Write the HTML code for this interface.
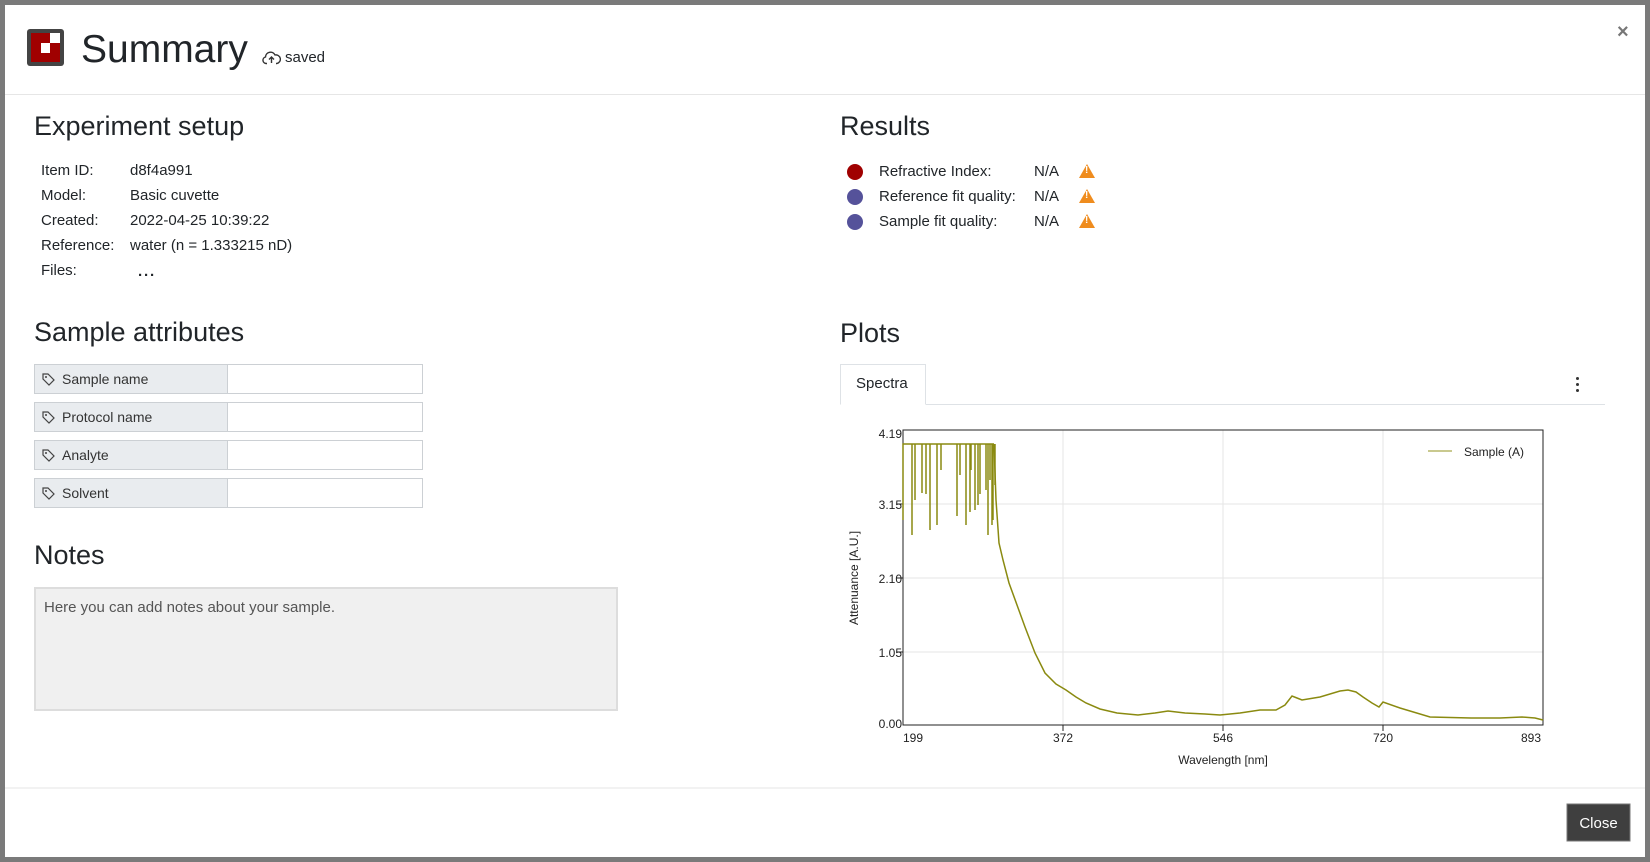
<!DOCTYPE html>
<html><head><meta charset="utf-8"><style>
*{box-sizing:border-box;margin:0;padding:0}
body{width:1650px;height:862px;background:#7a7a7a;font-family:"Liberation Sans",sans-serif;color:#212529;position:relative;overflow:hidden}
.modal{position:absolute;left:5px;top:5px;width:1640px;height:852px;background:#fff}
.abs{position:absolute}
h2{position:absolute;font-weight:400;font-size:27px;line-height:32px;white-space:nowrap}
.row{position:absolute;font-size:15px;white-space:nowrap}
.inp{position:absolute;left:29px;width:389px;height:30px;border:1px solid #ccd0d4;background:#fff}
.inp .lab{position:absolute;left:0;top:0;width:193px;height:28px;background:#e9ecef;border-right:1px solid #ccd0d4;font-size:14px;line-height:28px;padding-left:27px;color:#333}
.inp svg{position:absolute;left:7px;top:8px;z-index:2}
.dot{position:absolute;width:16px;height:16px;border-radius:50%}
.warn{position:absolute;width:0;height:0;border-left:8px solid transparent;border-right:8px solid transparent;border-bottom:14px solid #ef8c1e}
.warn::after{content:"!";position:absolute;left:-2px;top:1px;color:#fff;font-size:10px;font-weight:bold}
.t{font-size:12px;fill:#222}
</style></head><body>
<div class="modal">
 <div class="abs" style="left:22px;top:24px;width:37px;height:37px;background:#444;border-radius:3px"></div>
 <div class="abs" style="left:26px;top:28px;width:29px;height:29px;background:#a00000"></div>
 <div class="abs" style="left:45px;top:28px;width:10px;height:10px;background:#fff"></div>
 <div class="abs" style="left:36px;top:38px;width:9px;height:10px;background:#fff"></div>
 <div class="abs" style="left:76px;top:22px;font-size:39px;line-height:46px">Summary</div>
 <svg class="abs" style="left:257px;top:45px" width="19" height="15" viewBox="0 0 19 15"><path d="M5 13.5H4a3.3 3.3 0 0 1-.5-6.5A5 5 0 0 1 13 5a3.5 3.5 0 0 1 2 8.5h-1" fill="none" stroke="#333" stroke-width="1.4"/><path d="M9.5 13V7M7 9.5l2.5-2.5 2.5 2.5" fill="none" stroke="#333" stroke-width="1.4"/></svg>
 <div class="abs" style="left:280px;top:44px;font-size:15px">saved</div>
 <div class="abs" style="left:1612px;top:16px;font-size:20px;font-weight:bold;color:#777">×</div>
 <div class="abs" style="left:0;top:89px;width:1640px;height:1px;background:#e6e6e6"></div>

 <h2 style="left:29px;top:105px">Experiment setup</h2>
 <div class="row" style="left:36px;top:157px">Item ID:</div><div class="row" style="left:125px;top:157px">d8f4a991</div>
 <div class="row" style="left:36px;top:182px">Model:</div><div class="row" style="left:125px;top:182px">Basic cuvette</div>
 <div class="row" style="left:36px;top:207px">Created:</div><div class="row" style="left:125px;top:207px">2022-04-25 10:39:22</div>
 <div class="row" style="left:36px;top:232px">Reference:</div><div class="row" style="left:125px;top:232px">water (n = 1.333215 nD)</div>
 <div class="row" style="left:36px;top:257px">Files:</div><div class="row" style="left:133px;top:262px;font-weight:bold;letter-spacing:1px">···</div>

 <h2 style="left:29px;top:311px">Sample attributes</h2>
 <div class="inp" style="top:359px"><svg width="13" height="13" viewBox="0 0 13 13"><path d="M1 1h5l6 6-5 5-6-6z" fill="none" stroke="#444" stroke-width="1.2"/><circle cx="4" cy="4" r="1" fill="#444"/></svg><div class="lab">Sample name</div></div>
 <div class="inp" style="top:397px"><svg width="13" height="13" viewBox="0 0 13 13"><path d="M1 1h5l6 6-5 5-6-6z" fill="none" stroke="#444" stroke-width="1.2"/><circle cx="4" cy="4" r="1" fill="#444"/></svg><div class="lab">Protocol name</div></div>
 <div class="inp" style="top:435px"><svg width="13" height="13" viewBox="0 0 13 13"><path d="M1 1h5l6 6-5 5-6-6z" fill="none" stroke="#444" stroke-width="1.2"/><circle cx="4" cy="4" r="1" fill="#444"/></svg><div class="lab">Analyte</div></div>
 <div class="inp" style="top:473px"><svg width="13" height="13" viewBox="0 0 13 13"><path d="M1 1h5l6 6-5 5-6-6z" fill="none" stroke="#444" stroke-width="1.2"/><circle cx="4" cy="4" r="1" fill="#444"/></svg><div class="lab">Solvent</div></div>

 <h2 style="left:29px;top:534px">Notes</h2>
 <div class="abs" style="left:29px;top:582px;width:584px;height:124px;background:#f0f0f0;border:2px solid #ddd;font-size:15px;color:#555;padding:10px 8px">Here you can add notes about your sample.</div>

 <h2 style="left:835px;top:105px">Results</h2>
 <div class="dot" style="left:842px;top:159px;background:#a00000"></div>
 <div class="dot" style="left:842px;top:184px;background:#55529a"></div>
 <div class="dot" style="left:842px;top:209px;background:#55529a"></div>
 <div class="row" style="left:874px;top:158px">Refractive Index:</div><div class="row" style="left:1029px;top:158px">N/A</div>
 <div class="row" style="left:874px;top:183px">Reference fit quality:</div><div class="row" style="left:1029px;top:183px">N/A</div>
 <div class="row" style="left:874px;top:208px">Sample fit quality:</div><div class="row" style="left:1029px;top:208px">N/A</div>
 <div class="warn" style="left:1074px;top:159px"></div>
 <div class="warn" style="left:1074px;top:184px"></div>
 <div class="warn" style="left:1074px;top:209px"></div>

 <h2 style="left:835px;top:312px">Plots</h2>
 <div class="abs" style="left:835px;top:399px;width:765px;height:1px;background:#dee2e6"></div>
 <div class="abs" style="left:835px;top:359px;width:86px;height:41px;border:1px solid #dee2e6;border-bottom:1px solid #fff;background:#fff;font-size:15px;line-height:38px;padding-left:15px">Spectra</div>
 <div class="abs" style="left:1571px;top:372px;width:3px;height:3px;background:#333;border-radius:50%;box-shadow:0 6px 0 #333,0 12px 0 #333"></div>
</div>
<svg class="abs" style="left:0;top:0" width="1650" height="862">
 <g stroke="#e5e5e5" stroke-width="1">
  <line x1="1063" y1="430" x2="1063" y2="725"/><line x1="1223" y1="430" x2="1223" y2="725"/><line x1="1383" y1="430" x2="1383" y2="725"/>
  <line x1="903" y1="504" x2="1543" y2="504"/><line x1="903" y1="578" x2="1543" y2="578"/><line x1="903" y1="652" x2="1543" y2="652"/>
 </g>
 <rect x="903" y="430" width="640" height="295" fill="none" stroke="#222" stroke-width="1"/>
 <g stroke="#222"><line x1="897" y1="504" x2="903" y2="504"/><line x1="897" y1="578" x2="903" y2="578"/><line x1="897" y1="652" x2="903" y2="652"/><line x1="1063" y1="725" x2="1063" y2="731"/><line x1="1223" y1="725" x2="1223" y2="731"/><line x1="1383" y1="725" x2="1383" y2="731"/></g>
 <g class="t" text-anchor="end"><text x="902" y="438">4.19</text><text x="902" y="509">3.15</text><text x="902" y="583">2.10</text><text x="902" y="657">1.05</text><text x="902" y="728">0.00</text></g>
 <g class="t" text-anchor="middle"><text x="913" y="742">199</text><text x="1063" y="742">372</text><text x="1223" y="742">546</text><text x="1383" y="742">720</text><text x="1531" y="742">893</text>
 <text x="1223" y="764">Wavelength [nm]</text>
 <text transform="translate(858,578) rotate(-90)">Attenuance [A.U.]</text></g>
 <line x1="1428" y1="451" x2="1452" y2="451" stroke="#c9c98f" stroke-width="2"/>
 <text class="t" x="1464" y="456">Sample (A)</text>
 <g fill="none" stroke="#8a8a10" stroke-width="1.5">
  <path d="M903 520V444H994"/>
  <path d="M912 444V535M915 444V500M922 444V493M926 444V494M930 444V530M937 444V525M941 444V470M957 444V516M960 444V475M966 444V525M970 444V512M971 444V470M975 444V510M978 444V505M980 444V494M986 444V490M988 444V535M990 444V480M992 444V525M993 444V520M995 444V485"/>
  <path d="M994 444L996 500L999 543L1003 560L1009 583L1017 605L1025 627L1035 653L1045 673L1056 684L1066 690L1076 697L1086 703L1100 709L1117 713L1138 715L1155 713L1168 711L1185 713L1205 714L1220 715L1240 713L1260 710L1276 710L1285 705L1292 696L1297 698L1302 700L1320 697L1340 691L1348 690L1356 692L1363 697L1372 703L1379 707L1383 702L1400 708L1430 717L1471 718L1500 718L1522 717L1535 718L1543 720"/>
 </g>
 <rect x="0" y="0" width="1650" height="5" fill="#7a7a7a"/>
 <line x1="5" y1="788" x2="1645" y2="788" stroke="#e6e6e6"/>
 <rect x="1567" y="804" width="63" height="37" fill="#3f3f3f" stroke="#777"/>
 <text x="1598.5" y="828" text-anchor="middle" fill="#fff" font-size="15">Close</text>
</svg>
</body></html>
